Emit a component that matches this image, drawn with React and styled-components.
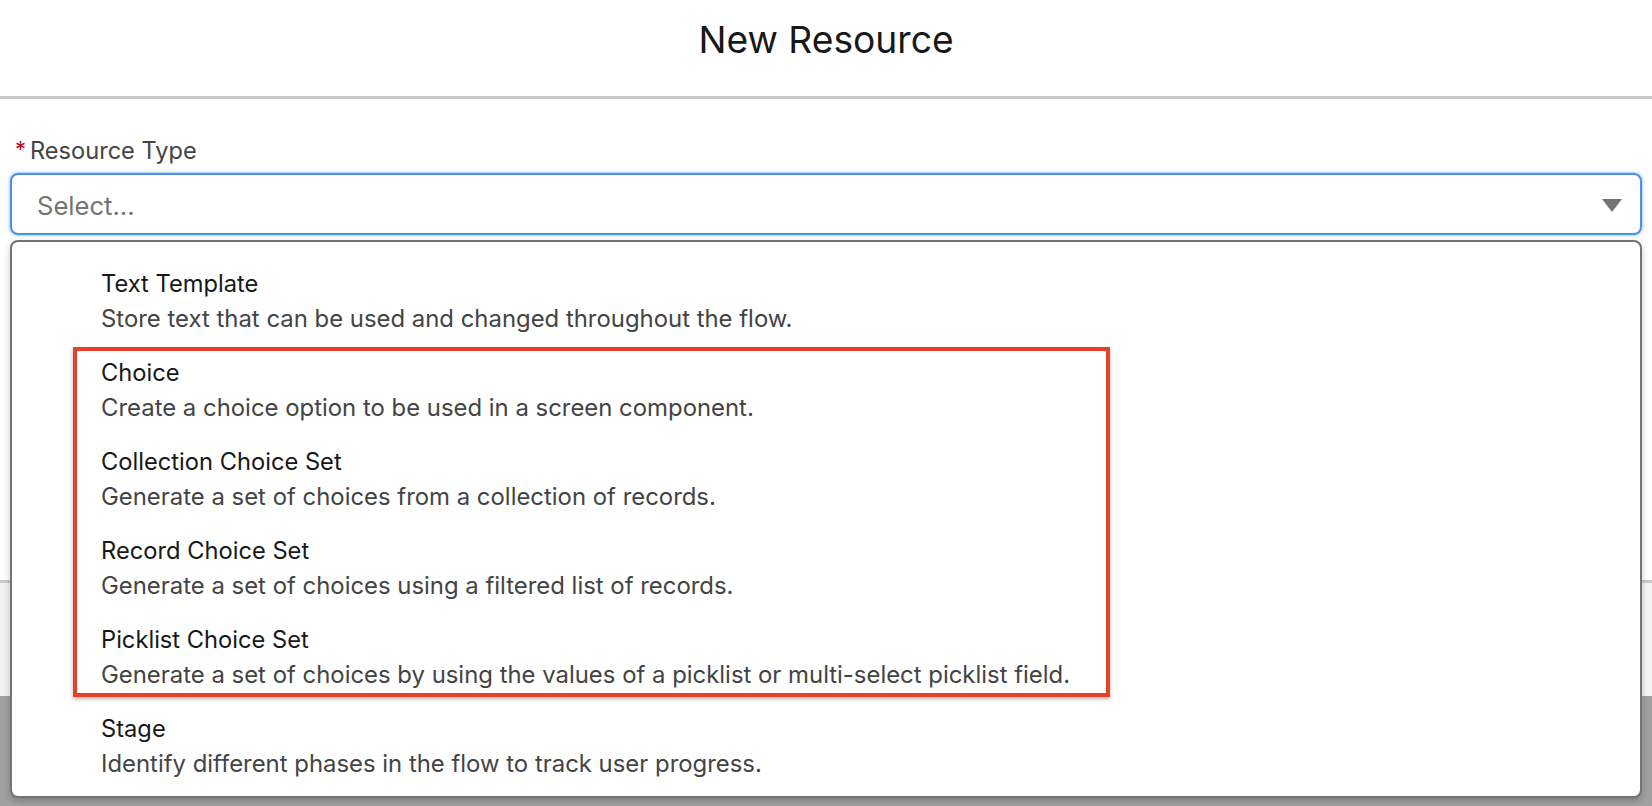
import React from "react";
import styled, { createGlobalStyle } from "styled-components";

const Global = createGlobalStyle`
  html, body { margin: 0; padding: 0; background: #ffffff; }
  body { font-family: Inter, "Noto Sans", "Liberation Sans", sans-serif; overflow: hidden; }
  * { box-sizing: border-box; }
`;

const Page = styled.div`
  width: 1652px;
  height: 806px;
  display: flex;
  flex-direction: column;
  background: #a0a0a0;
`;

const Header = styled.header`
  flex: none;
  height: 99px;
  padding-top: 17px;
  background: #ffffff;
  border-bottom: 3px solid #c9c9c9;
  display: flex;
  justify-content: center;
  align-items: flex-start;
`;

const Title = styled.h1`
  margin: 0;
  font-size: 37.2px;
  line-height: 46px;
  font-weight: 400;
  color: #181818;
`;

const Body = styled.section`
  flex: none;
  height: 481px;
  background: #ffffff;
  padding: 37px 10px 0;
`;

const Label = styled.label`
  display: flex;
  align-items: flex-start;
  padding-left: 5px;
  font-size: 23.6px;
  line-height: 30px;
  color: #444444;
`;

const Required = styled.abbr`
  width: 10px;
  margin-right: 5px;
  color: #ba0517;
  font-size: 22px;
  line-height: 26px;
  text-decoration: none;
`;

const Combo = styled.div`
  position: relative;
  margin-top: 7px;
`;

const Input = styled.div`
  height: 62px;
  display: flex;
  align-items: center;
  justify-content: space-between;
  padding: 2px 18px 0 25px;
  border: 2px solid #4a90e8;
  border-radius: 8px;
  box-shadow: 0 0 3px 1px rgba(74, 144, 232, 0.45);
  font-size: 25.6px;
  color: #747474;
`;

const Caret = styled.svg`
  width: 20px;
  height: 13px;
  flex: none;
`;

const Dropdown = styled.div`
  position: absolute;
  left: 0;
  right: 0;
  top: calc(100% + 5px);
  height: 558px;
  background: #ffffff;
  border: 2px solid #747474;
  border-radius: 8px;
  box-shadow: 0 3px 6px rgba(0, 0, 0, 0.22);
  z-index: 2;
`;

const Listbox = styled.ul`
  list-style: none;
  margin: 0;
  padding: 15px 0 5px;
`;

const Option = styled.li`
  padding: 11px 0 11px 89px;
  display: flex;
  flex-direction: column;
  gap: 3px;
`;

const OptionTitle = styled.span`
  font-size: 23.7px;
  line-height: 32px;
  color: #181818;
`;

const OptionMeta = styled.span`
  font-size: 23.9px;
  line-height: 32px;
  color: #444444;
`;

const Highlight = styled.div`
  position: absolute;
  left: 61px;
  top: 105px;
  width: 1037px;
  height: 350px;
  border: 4px solid #e8412b;
  box-shadow: 0 2px 4px rgba(0, 0, 0, 0.3);
  pointer-events: none;
`;

const Footer = styled.footer`
  flex: none;
  height: 116px;
  background: #f3f3f3;
  border-top: 3px solid #c9c9c9;
`;

const options = [
  ["Text Template", "Store text that can be used and changed throughout the flow."],
  ["Choice", "Create a choice option to be used in a screen component."],
  ["Collection Choice Set", "Generate a set of choices from a collection of records."],
  ["Record Choice Set", "Generate a set of choices using a filtered list of records."],
  ["Picklist Choice Set", "Generate a set of choices by using the values of a picklist or multi-select picklist field."],
  ["Stage", "Identify different phases in the flow to track user progress."],
];

export default function App() {
  return (
    <>
      <Global />
      <Page>
        <Header>
          <Title>New Resource</Title>
        </Header>
        <Body>
          <Label>
            <Required title="required">*</Required>
            Resource Type
          </Label>
          <Combo>
            <Input>
              <span>Select...</span>
              <Caret viewBox="0 0 20 13">
                <polygon points="0,0 20,0 10,13" fill="#747474" />
              </Caret>
            </Input>
            <Dropdown>
              <Listbox>
                {options.map(([t, d]) => (
                  <Option key={t}>
                    <OptionTitle>{t}</OptionTitle>
                    <OptionMeta>{d}</OptionMeta>
                  </Option>
                ))}
              </Listbox>
              <Highlight />
            </Dropdown>
          </Combo>
        </Body>
        <Footer />
      </Page>
    </>
  );
}
